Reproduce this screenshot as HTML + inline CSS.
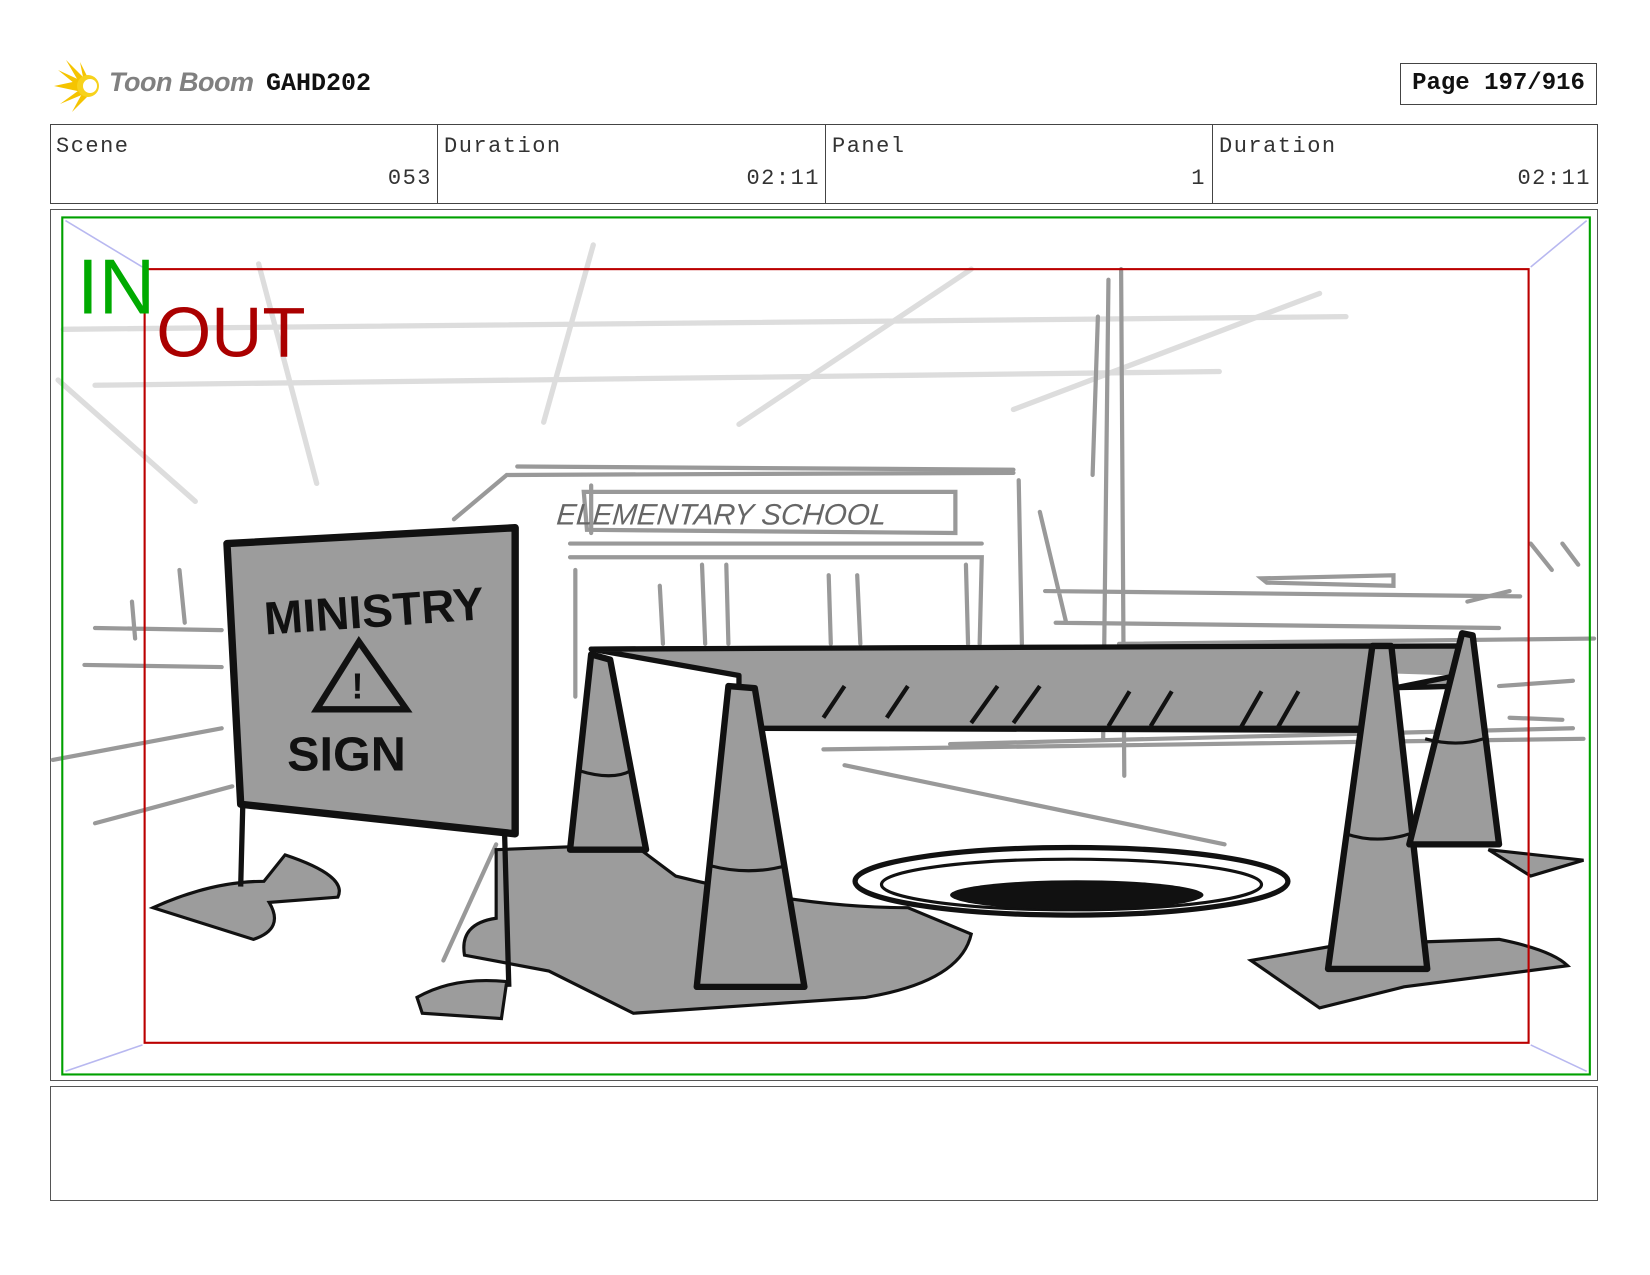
<!DOCTYPE html>
<html><head><meta charset="utf-8"><style>
body{margin:0;width:1650px;height:1275px;background:#fff;position:relative;overflow:hidden;font-family:"Liberation Mono",monospace}
.abs{position:absolute}
.cell{position:absolute;top:124px;height:79px;border-left:1px solid #444;box-sizing:border-box}
.cell .l{position:absolute;left:6px;top:10px;font-size:22px;color:#333;letter-spacing:1.5px}
.cell .r{position:absolute;right:6px;top:42px;font-size:22px;color:#333;letter-spacing:1.5px}
</style></head><body>
<svg class="abs" style="left:52px;top:58px" width="56" height="56" viewBox="0 0 56 56">
<g fill="#f5c400"><path d="M2 28 L30 22 L30 34Z"/><path d="M6 12 L32 24 L28 30Z"/><path d="M14 2 L34 22 L28 26Z"/><path d="M8 46 L30 30 L32 36Z"/><path d="M20 54 L32 32 L36 38Z"/><path d="M28 4 L38 24 L32 24Z"/></g>
<circle cx="36" cy="28" r="11" fill="#f7d21c"/><circle cx="38" cy="28" r="7" fill="#fff"/></svg>
<div class="abs" style="left:109px;top:67px;font:italic bold 27px 'Liberation Sans',sans-serif;color:#808080;letter-spacing:-0.5px">Toon Boom</div>
<div class="abs" style="left:266px;top:69px;font-weight:bold;font-size:25px;color:#111">GAHD202</div>
<div class="abs" style="left:1400px;top:63px;width:197px;height:42px;border:1px solid #444;box-sizing:border-box;font-weight:bold;font-size:24px;line-height:40px;text-align:center;color:#111">Page 197/916</div>
<div class="abs" style="left:50px;top:124px;width:1548px;height:80px;border:1px solid #444;box-sizing:border-box"></div>
<div class="cell" style="left:50px;width:388px;border-left:none"><span class="l">Scene</span><span class="r">053</span></div>
<div class="cell" style="left:437px;width:389px"><span class="l">Duration</span><span class="r">02:11</span></div>
<div class="cell" style="left:825px;width:387px"><span class="l">Panel</span><span class="r">1</span></div>
<div class="cell" style="left:1212px;width:385px"><span class="l">Duration</span><span class="r">02:11</span></div>
<div class="abs" style="left:50px;top:209px;width:1548px;height:872px;border:1px solid #555;box-sizing:border-box"></div>
<div class="abs" style="left:50px;top:1086px;width:1548px;height:115px;border:1px solid #555;box-sizing:border-box"></div>
<svg class="abs" style="left:0;top:0" width="1650" height="1275" viewBox="0 0 1563 1208" preserveAspectRatio="none">
<g stroke="#ddd" stroke-width="5" fill="none" stroke-linecap="round">
<path d="M60 312 L1275 300"/><path d="M90 365 L1155 352"/><path d="M245 250 L300 458"/><path d="M562 232 L515 400"/><path d="M700 402 L920 255"/><path d="M960 388 L1250 278"/><path d="M55 360 L185 475"/>
</g>
<g stroke="#999" stroke-width="4" fill="none" stroke-linecap="round">
<path d="M430 492 L480 450 L960 448"/><path d="M490 442 L960 445"/><path d="M965 455 L968 610"/><path d="M1050 265 L1045 700 M1062 255 L1065 735 M1040 300 L1035 450"/>
<path d="M540 515 L930 515 M540 528 L930 528 L928 610"/><path d="M545 540 L545 660 M625 555 L628 610 M665 535 L668 610 M688 535 L690 610 M785 545 L787 610 M812 545 L815 610 M915 535 L917 610"/>
<path d="M553 466 L905 466 L905 505 L556 502 Z"/><path d="M560 460 L560 505"/>
<path d="M990 560 L1440 565 M1000 590 L1420 595 M1060 610 L1510 605 M985 485 L1010 590"/>
<path d="M1195 548 L1320 545 L1320 555 L1200 552Z M1390 570 L1430 560 M1450 515 L1470 540 M1480 515 L1495 535"/>
<path d="M90 595 L210 597 M80 630 L210 632 M125 570 L128 605 M170 540 L175 590"/>
<path d="M50 720 L210 690 M90 780 L220 745 M470 800 L420 910"/>
<path d="M780 710 L1500 700 M800 725 L1160 800 M900 705 L1490 690"/>
<path d="M1420 650 L1490 645 M1430 680 L1480 682"/>
</g>
<g font-family="'Liberation Sans',sans-serif" fill="#666" font-size="28" font-style="italic"><text x="570" y="497" transform="skewX(-5)">ELEMENTARY SCHOOL</text></g>
<g fill="#9c9c9c" stroke="#111" stroke-width="3">
<path d="M145 860 Q200 835 250 835 L270 810 Q330 830 320 850 L255 855 Q270 880 240 890 Z"/>
<path d="M470 805 L600 800 L640 830 Q760 860 860 860 L920 885 Q910 930 820 945 L600 960 L520 920 L440 905 Q435 875 470 870 L470 810Z"/>
<path d="M395 945 Q430 925 480 930 L475 965 L400 960Z"/>
<path d="M1185 910 L1270 895 L1420 890 Q1470 900 1485 915 L1330 935 L1250 955Z"/>
<path d="M1410 805 L1500 815 L1450 830Z"/>
</g>
<ellipse cx="1015" cy="835" rx="205" ry="32" fill="#fff" stroke="#111" stroke-width="5"/>
<ellipse cx="1015" cy="838" rx="180" ry="24" fill="none" stroke="#111" stroke-width="3"/>
<ellipse cx="1020" cy="848" rx="120" ry="14" fill="#111"/>
<path d="M215 515 L488 500 L488 790 L228 762 Z" fill="#9c9c9c" stroke="#111" stroke-width="7" stroke-linejoin="round"/>
<path d="M230 762 L228 840 M478 790 L482 935" stroke="#111" stroke-width="5"/>
<text x="250" y="595" font-family="'Liberation Sans',sans-serif" font-size="44" font-weight="bold" fill="#111" transform="rotate(-4 340 580)">MINISTRY</text>
<path d="M300 672 L340 608 L385 672 Z" fill="none" stroke="#111" stroke-width="6"/>
<text x="333" y="662" font-size="34" font-weight="bold" fill="#111" font-family="'Liberation Sans',sans-serif">!</text>
<text x="272" y="730" font-family="'Liberation Sans',sans-serif" font-size="46" font-weight="bold" fill="#111">SIGN</text>
<path d="M560 615 L1390 612 L1385 650 Q1000 660 720 655 L710 690 L1300 692 L1305 655 L1380 640" fill="#9c9c9c" stroke="#111" stroke-width="5"/>
<path d="M560 615 L1300 612 L1300 690 Q1000 690 700 690 L700 640 L560 615Z" fill="#9c9c9c" stroke="#111" stroke-width="5" stroke-linejoin="round"/>
<g stroke="#111" stroke-width="4"><path d="M780 680 L800 650 M840 680 L860 650 M920 685 L945 650 M960 685 L985 650 M1050 688 L1070 655 M1090 688 L1110 655 M1175 690 L1195 655 M1210 690 L1230 655"/></g>
<g fill="#9c9c9c" stroke="#111" stroke-width="6" stroke-linejoin="round">
<path d="M560 620 L578 625 L612 805 L540 805 Z"/>
<path d="M690 650 L715 652 L762 935 L660 935 Z"/>
<path d="M1300 612 L1318 612 L1352 918 L1258 918 Z"/>
<path d="M1385 600 L1395 602 L1420 800 L1335 800 Z"/>
</g>
<g stroke="#111" stroke-width="3" fill="none"><path d="M548 730 Q580 740 598 730 M672 820 Q710 830 745 820 M1275 790 Q1305 800 1335 790 M1350 700 Q1380 708 1405 700"/></g>
<g stroke="#00a000" stroke-width="2" fill="none"><rect x="59" y="206" width="1447" height="812"/></g>
<g stroke="#b00" stroke-width="2" fill="none"><rect x="137" y="255" width="1311" height="733"/></g>
<g stroke="#b8b8f0" stroke-width="1.5"><path d="M62 209 L135 253 M1503 209 L1450 253 M62 1015 L135 990 M1503 1015 L1450 990"/></g>
<text x="73" y="297" font-family="'Liberation Sans',sans-serif" font-size="74" fill="#00aa00">IN</text>
<text x="148" y="338" font-family="'Liberation Sans',sans-serif" font-size="67" fill="#aa0000">OUT</text>
</svg>
</body></html>
